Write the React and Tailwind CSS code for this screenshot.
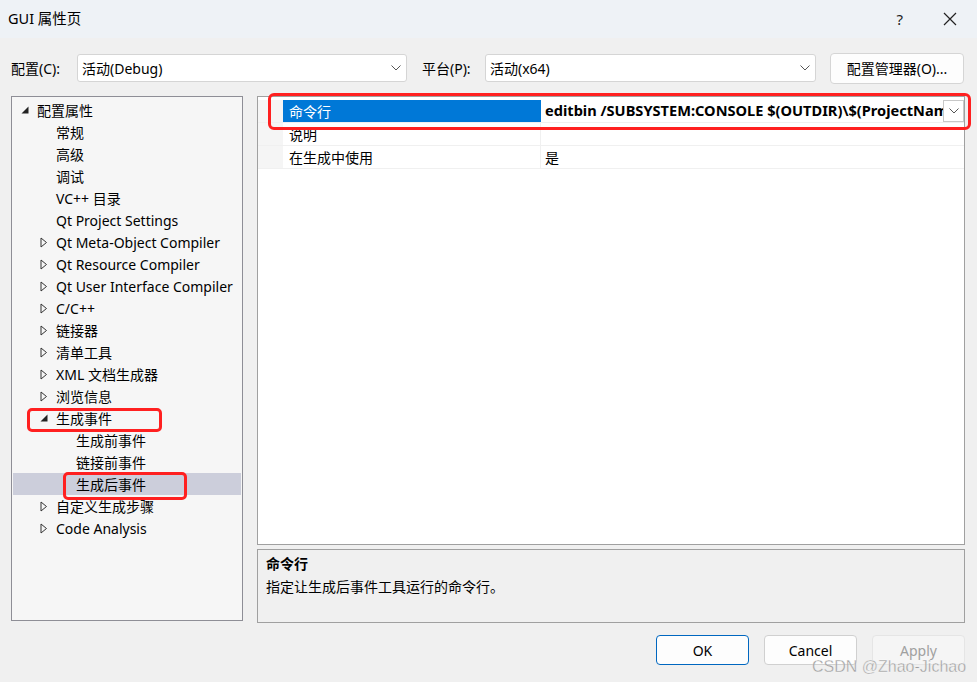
import React from "react";

const FONT = { fontFamily: '"Noto Sans", "Noto Sans CJK SC", sans-serif' };

function Expanded() {
  return (
    <svg width="8" height="8" viewBox="0 0 8 8" className="shrink-0">
      <path d="M7.5 0.5 L7.5 7.5 L0.5 7.5 Z" fill="#222" />
    </svg>
  );
}
function Collapsed() {
  return (
    <svg width="8" height="11" viewBox="0 0 8 11" className="shrink-0">
      <path d="M1 1 L6.5 5.5 L1 10 Z" fill="none" stroke="#333" strokeWidth="1" />
    </svg>
  );
}
function Chevron({ color = "#555" }) {
  return (
    <svg width="12" height="8" viewBox="0 0 12 8">
      <path d="M1.5 1.5 L6 6 L10.5 1.5" fill="none" stroke={color} strokeWidth="1" />
    </svg>
  );
}

const tree = [
  { t: "配置属性", lvl: 0, icon: "e" },
  { t: "常规", lvl: 1 },
  { t: "高级", lvl: 1 },
  { t: "调试", lvl: 1 },
  { t: "VC++ 目录", lvl: 1 },
  { t: "Qt Project Settings", lvl: 1 },
  { t: "Qt Meta-Object Compiler", lvl: 1, icon: "c" },
  { t: "Qt Resource Compiler", lvl: 1, icon: "c" },
  { t: "Qt User Interface Compiler", lvl: 1, icon: "c" },
  { t: "C/C++", lvl: 1, icon: "c" },
  { t: "链接器", lvl: 1, icon: "c" },
  { t: "清单工具", lvl: 1, icon: "c" },
  { t: "XML 文档生成器", lvl: 1, icon: "c" },
  { t: "浏览信息", lvl: 1, icon: "c" },
  { t: "生成事件", lvl: 1, icon: "e" },
  { t: "生成前事件", lvl: 2 },
  { t: "链接前事件", lvl: 2 },
  { t: "生成后事件", lvl: 2, sel: true },
  { t: "自定义生成步骤", lvl: 1, icon: "c" },
  { t: "Code Analysis", lvl: 1, icon: "c" },
];

function TreeRow({ item }) {
  const textLeft = item.lvl === 0 ? 24 : item.lvl === 1 ? 43 : 63;
  const iconLeft = item.lvl === 0 ? 8 : 27;
  return (
    <div
      className={`relative h-[22px] flex items-center text-[14px] text-black ${item.sel ? "bg-[#cccedb]" : ""}`}
    >
      {item.icon && (
        <div className="absolute top-0 h-[22px] flex items-center" style={{ left: iconLeft }}>
          {item.icon === "e" ? <Expanded /> : <Collapsed />}
        </div>
      )}
      <span className="whitespace-nowrap" style={{ marginLeft: textLeft }}>
        {item.t}
      </span>
    </div>
  );
}

function Combo({ text, width }) {
  return (
    <div
      className="h-[28px] bg-white border border-[#d5d5d5] rounded-[3px] flex items-center justify-between pl-[4px] pr-[4px] shrink-0"
      style={{ width }}
    >
      <span className="text-[14px] text-black">{text}</span>
      <Chevron />
    </div>
  );
}

export default function App() {
  return (
    <div className="relative w-[977px] h-[682px] flex flex-col bg-[#f0f0f0] overflow-hidden" style={FONT}>
      {/* title bar */}
      <div className="h-[38px] bg-[#eef2f6] flex items-center justify-between pl-[8px] pr-[20px] shrink-0">
        <span className="text-[14.5px] text-black">GUI 属性页</span>
        <div className="flex items-center gap-[40px]">
          <span className="text-[15px] text-[#222]">?</span>
          <svg width="14" height="14" viewBox="0 0 14 14">
            <path d="M1 1 L13 13 M13 1 L1 13" stroke="#222" strokeWidth="1.2" />
          </svg>
        </div>
      </div>

      {/* body */}
      <div className="flex-1 flex flex-col pl-[11px] pr-[12px] pt-[14px]">
        {/* config row */}
        <div className="flex items-center h-[32px]">
          <span className="text-[14px] text-black w-[66px] shrink-0">配置(C):</span>
          <Combo text="活动(Debug)" width={330} />
          <span className="text-[14px] text-black ml-[15px] w-[63px] shrink-0">平台(P):</span>
          <Combo text="活动(x64)" width={331} />
          <div className="ml-[14px] h-[31px] w-[134px] shrink-0 bg-[#fdfdfd] border border-[#d5d5d5] rounded-[4px] flex items-center justify-center text-[14px] text-black">
            配置管理器(O)...
          </div>
        </div>

        {/* main */}
        <div className="flex mt-[12px] h-[527px] gap-[14px]">
          {/* tree */}
          <div className="w-[232px] shrink-0 h-[525px] bg-[#f6f6f6] border border-[#8e8e96] pt-[2px] px-[1px]">
            {tree.map((it, i) => (
              <TreeRow key={i} item={it} />
            ))}
          </div>

          {/* right */}
          <div className="flex-1 min-w-0 flex flex-col gap-[4px]">
            <div className="h-[449px] bg-white border border-[#a0a0a0] pt-[3px]">
              {/* row 1 */}
              <div className="flex h-[23px] border-b border-[#f0f0f0]">
                <div className="w-[25px] shrink-0 bg-[#f5f5f5]" />
                <div className="w-[258px] shrink-0 bg-[#0078d7] text-white text-[14px] flex items-center pl-[6px]">命令行</div>
                <div className="flex-1 flex items-center min-w-0 pl-[4px]">
                  <span className="flex-1 min-w-0 overflow-hidden whitespace-nowrap text-[14.6px] font-bold text-black">
                    editbin /SUBSYSTEM:CONSOLE $(OUTDIR)\$(ProjectName).exe
                  </span>
                  <div className="w-[21px] h-[22px] border border-[#c8c8c8] bg-white flex items-center justify-center shrink-0">
                    <Chevron />
                  </div>
                </div>
              </div>
              {/* row 2 */}
              <div className="flex h-[23px] border-b border-[#f0f0f0]">
                <div className="w-[25px] shrink-0 bg-[#f5f5f5]" />
                <div className="w-[258px] shrink-0 text-black text-[14px] flex items-center pl-[6px] border-r border-[#f0f0f0]">说明</div>
                <div className="flex-1" />
              </div>
              {/* row 3 */}
              <div className="flex h-[23px] border-b border-[#f0f0f0]">
                <div className="w-[25px] shrink-0 bg-[#f5f5f5]" />
                <div className="w-[258px] shrink-0 text-black text-[14px] flex items-center pl-[6px] border-r border-[#f0f0f0]">在生成中使用</div>
                <div className="flex-1 flex items-center pl-[4px] text-[14px] text-black">是</div>
              </div>
            </div>
            <div className="h-[74px] border border-[#a0a0a0] bg-[#f0f0f0] px-[8px] pt-[3px]">
              <div className="text-[14px] font-bold text-black leading-[22px]">命令行</div>
              <div className="text-[14px] text-black leading-[24px]">指定让生成后事件工具运行的命令行。</div>
            </div>
          </div>
        </div>

        {/* buttons */}
        <div className="flex justify-end gap-[15px] mt-[12px]">
          <div className="w-[93px] h-[30px] bg-[#fdfdfd] border border-[#0067c0] rounded-[4px] flex items-center justify-center text-[14px] text-black">OK</div>
          <div className="w-[93px] h-[30px] bg-[#fdfdfd] border border-[#d0d0d0] rounded-[4px] flex items-center justify-center text-[14px] text-black">Cancel</div>
          <div className="w-[93px] h-[30px] bg-[#f5f5f5] border border-[#e5e5e5] rounded-[4px] flex items-center justify-center text-[14px] text-[#a0a0a0]">Apply</div>
        </div>
      </div>

      {/* red annotation boxes */}
      <div className="absolute left-[268px] top-[93px] w-[703px] h-[37px] border-[3px] border-[#ff2020] rounded-[6px]" />
      <div className="absolute left-[27px] top-[408px] w-[135px] h-[24px] border-[3px] border-[#ff2020] rounded-[5px]" />
      <div className="absolute left-[63px] top-[472px] w-[124px] h-[28px] border-[3px] border-[#ff2020] rounded-[5px]" />

      {/* watermark */}
      <div
        className="absolute left-[812px] top-[655px] text-[16px] text-[#8a8a8a] opacity-80 whitespace-nowrap"
        style={{ fontFamily: '"Liberation Sans", Arial, sans-serif', WebkitTextStroke: "0.3px #ffffff" }}
      >
        CSDN @Zhao-Jichao
      </div>
    </div>
  );
}
